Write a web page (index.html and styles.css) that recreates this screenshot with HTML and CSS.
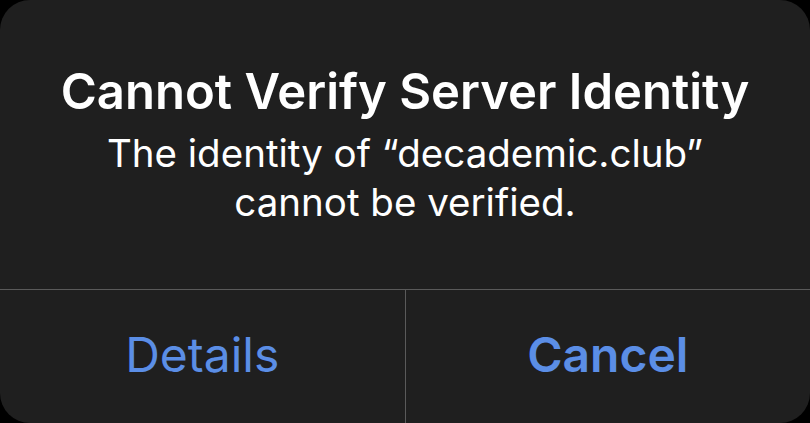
FILE: index.html
```html
<!DOCTYPE html>
<html>
<head>
<meta charset="utf-8">
<link rel="stylesheet" href="styles.css">
</head>
<body>
<div class="alert">
  <div class="content">
    <div class="title">Cannot Verify Server Identity</div>
    <div class="message">The identity of “decademic.club”<br>cannot be verified.</div>
  </div>
  <div class="actions">
    <div class="btn">Details</div>
    <div class="btn primary">Cancel</div>
  </div>
</div>
</body>
</html>
```
FILE: styles.css
```css
html, body {
  margin: 0;
  padding: 0;
  background: #000;
}
.alert {
  width: 810px;
  height: 423px;
  background: #1f1f1f;
  border-radius: 30px;
  display: flex;
  flex-direction: column;
  overflow: hidden;
  font-family: Inter, "Liberation Sans", sans-serif;
}
.content {
  height: 289px;
  box-sizing: border-box;
  padding-top: 62px;
  text-align: center;
  color: #fff;
}
.title {
  font-size: 49px;
  font-weight: 600;
  line-height: 60px;
}
.message {
  margin-top: 7px;
  font-size: 38.5px;
  line-height: 49px;
  font-weight: 400;
}
.actions {
  flex: 1;
  display: flex;
  border-top: 1.5px solid #5a5a5a;
}
.btn {
  flex: 1;
  display: flex;
  align-items: center;
  justify-content: center;
  font-size: 48px;
  color: #5b8ee6;
  padding-bottom: 4px;
}
.btn + .btn {
  border-left: 1.5px solid #5a5a5a;
}
.primary {
  font-weight: 600;
}
```
